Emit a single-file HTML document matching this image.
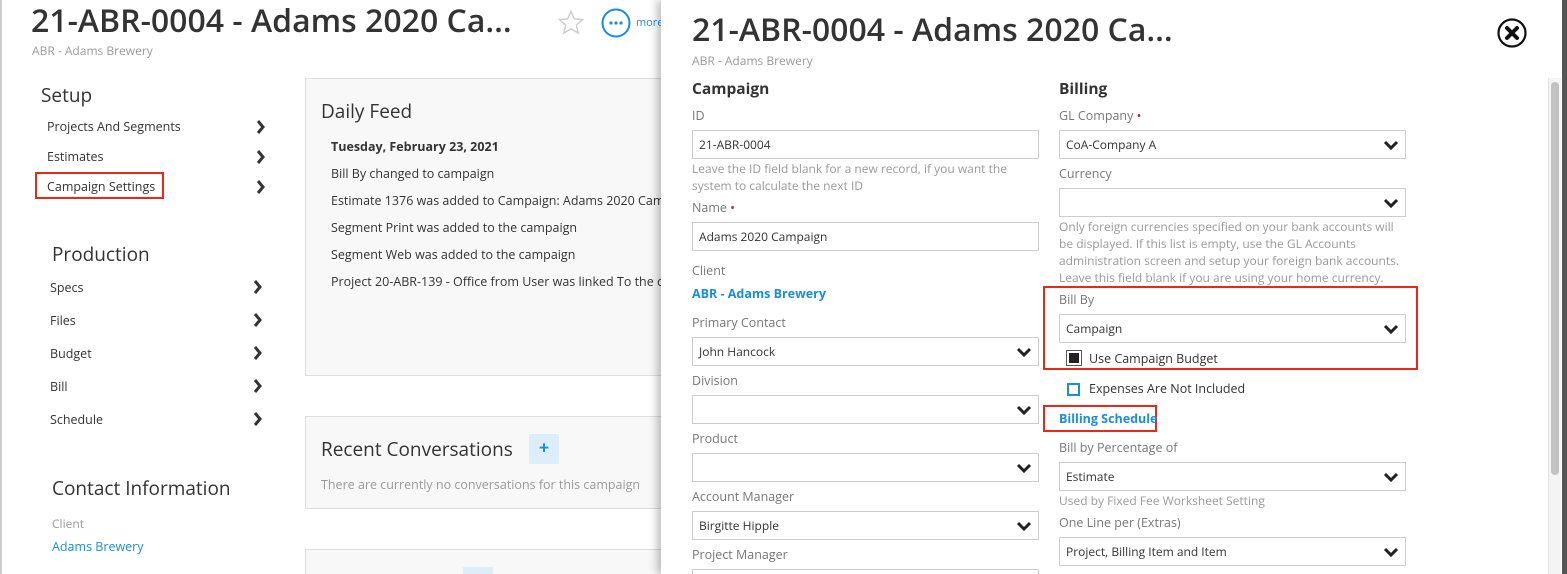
<!DOCTYPE html>
<html style="width:1567px;height:574px;overflow:hidden"><head><meta charset="utf-8"><style>
*{margin:0;padding:0;box-sizing:border-box}
body{width:1567px;height:574px;overflow:hidden;position:relative;background:#fff;font-family:"Open Sans","Liberation Sans",sans-serif;color:#333}
.a{position:absolute;white-space:nowrap}
.t{font-size:12.5px;color:#333}
.g{color:#999;font-size:12px}
.h{font-size:19px;color:#333;font-weight:500}
.card{position:absolute;background:#f8f8f8;border:1px solid #ddd}
.inp{position:absolute;height:29px;border:1px solid #ccc;background:#fff;font-size:12px;padding:5px 6px;white-space:nowrap}
.lab{position:absolute;font-size:12.5px;color:#777;white-space:nowrap}
.sel svg{position:absolute;right:6px;top:9px}
.red{position:absolute;border:2px solid #e8281b}
.ttl{font-size:32px;font-weight:600;color:#333}
</style></head><body>
<div style="position:absolute;left:0;top:0;width:2px;height:574px;background:#ccc"></div>
<div class="a ttl" style="left:31px;top:-1px">21-ABR-0004 - Adams 2020 Ca...</div>
<div class="a g" style="left:32px;top:42px">ABR - Adams Brewery</div>
<svg class="a" style="left:557px;top:9px" width="28" height="28" viewBox="0 0 24 24"><path d="M12 2l2.9 6.5 7 .6-5.3 4.6 1.6 6.9L12 17l-6.2 3.6 1.6-6.9L2.1 9.1l7-.6z" fill="none" stroke="#ccc" stroke-width="1.2"/></svg>
<svg class="a" style="left:601px;top:8px" width="30" height="30"><circle cx="15" cy="15" r="13.5" fill="none" stroke="#1a8ed6" stroke-width="2"/><circle cx="10" cy="15" r="1.6" fill="#1a8ed6"/><circle cx="15" cy="15" r="1.6" fill="#1a8ed6"/><circle cx="20" cy="15" r="1.6" fill="#1a8ed6"/></svg>
<div class="a" style="left:636px;top:15px;font-size:11px;color:#1a8ed6">more</div>

<div class="a h" style="left:41px;top:82px">Setup</div>
<div class="a t" style="left:47px;top:118px">Projects And Segments</div>
<div class="a t" style="left:47px;top:148px">Estimates</div>
<div class="a t" style="left:47px;top:178px">Campaign Settings</div>
<div class="red" style="left:35px;top:172px;width:129px;height:27px"></div>
<div class="a h" style="left:52px;top:241px">Production</div>
<div class="a t" style="left:50px;top:279px">Specs</div>
<div class="a t" style="left:50px;top:312px">Files</div>
<div class="a t" style="left:50px;top:345px">Budget</div>
<div class="a t" style="left:50px;top:378px">Bill</div>
<div class="a t" style="left:50px;top:411px">Schedule</div>
<div class="a h" style="left:52px;top:475px">Contact Information</div>
<div class="a g" style="left:52px;top:515px">Client</div>
<div class="a" style="left:52px;top:538px;font-size:12.5px;color:#1a8ed6">Adams Brewery</div>

<svg class="a" style="left:0;top:0" width="300" height="574">
<g fill="none" stroke="#333" stroke-width="3">
<path d="M258 121l5 6-5 6"/><path d="M258 151l5 6-5 6"/><path d="M258 181l5 6-5 6"/>
<path d="M255 281l5 6-5 6"/><path d="M255 314l5 6-5 6"/><path d="M255 347l5 6-5 6"/><path d="M255 380l5 6-5 6"/><path d="M255 413l5 6-5 6"/>
</g></svg>

<div class="card" style="left:305px;top:78px;width:400px;height:298px"></div>
<div class="a h" style="left:321px;top:98px">Daily Feed</div>
<div class="a t" style="left:331px;top:138px;font-weight:bold">Tuesday, February 23, 2021</div>
<div class="a t" style="left:331px;top:165px">Bill By changed to campaign</div>
<div class="a t" style="left:331px;top:192px">Estimate 1376 was added to Campaign: Adams 2020 Campaign</div>
<div class="a t" style="left:331px;top:219px">Segment Print was added to the campaign</div>
<div class="a t" style="left:331px;top:246px">Segment Web was added to the campaign</div>
<div class="a t" style="left:331px;top:273px">Project 20-ABR-139 - Office from User was linked To the campaign</div>

<div class="card" style="left:305px;top:416px;width:400px;height:93px"></div>
<div class="a h" style="left:321px;top:436px">Recent Conversations</div>
<div class="a" style="left:529px;top:434px;width:30px;height:30px;background:#dceefa;border-radius:2px;color:#1a8ed6;font-weight:bold;font-size:18px;text-align:center;line-height:29px">+</div>
<div class="a g" style="left:321px;top:476px;font-size:12.5px">There are currently no conversations for this campaign</div>
<div class="card" style="left:305px;top:549px;width:400px;height:40px"></div>
<div class="a" style="left:463px;top:567px;width:30px;height:20px;background:#dceefa"></div>

<div style="position:absolute;left:661px;top:0;width:901px;height:574px;background:#fff;box-shadow:-4px 0 8px rgba(0,0,0,0.25)"></div>
<div style="position:absolute;left:1562px;top:0;width:5px;height:574px;background:#555"></div>
<div style="position:absolute;left:1548px;top:78px;width:13px;height:496px;background:#f4f4f4;border-left:1px solid #e4e4e4"></div>
<div style="position:absolute;left:1551px;top:82px;width:8px;height:393px;background:#c2c2c2;border-radius:4px"></div>

<div class="a ttl" style="left:692px;top:8px">21-ABR-0004 - Adams 2020 Ca...</div>
<div class="a g" style="left:692px;top:52px">ABR - Adams Brewery</div>
<svg class="a" style="left:1497px;top:18px" width="30" height="30"><circle cx="15" cy="15" r="13.5" fill="none" stroke="#111" stroke-width="2.2"/><path d="M10 10l10 10M20 10l-10 10" stroke="#111" stroke-width="4" stroke-linecap="round"/></svg>

<div class="a" style="left:692px;top:77px;font-size:15.5px;font-weight:bold;color:#333">Campaign</div>
<div class="a" style="left:1059px;top:77px;font-size:15.5px;font-weight:bold;color:#333">Billing</div>

<div class="lab" style="left:692px;top:107px">ID</div>
<div class="inp" style="left:692px;top:130px;width:347px">21-ABR-0004</div>
<div class="lab" style="left:692px;top:160px;color:#999;font-size:12px;line-height:17px;white-space:normal;width:340px">Leave the ID field blank for a new record, if you want the system to calculate the next ID</div>
<div class="lab" style="left:692px;top:199px">Name <span style="color:#b22">•</span></div>
<div class="inp" style="left:692px;top:222px;width:347px">Adams 2020 Campaign</div>
<div class="lab" style="left:692px;top:262px">Client</div>
<div class="a" style="left:692px;top:285px;font-size:12.5px;font-weight:bold;color:#1a8ed6">ABR - Adams Brewery</div>
<div class="lab" style="left:692px;top:314px">Primary Contact</div>
<div class="inp sel" style="left:692px;top:337px;width:347px">John Hancock<svg width="16" height="10"><path d="M2 2l6 6 6-6" fill="none" stroke="#222" stroke-width="3"/></svg></div>
<div class="lab" style="left:692px;top:372px">Division</div>
<div class="inp sel" style="left:692px;top:395px;width:347px"><svg width="16" height="10"><path d="M2 2l6 6 6-6" fill="none" stroke="#222" stroke-width="3"/></svg></div>
<div class="lab" style="left:692px;top:430px">Product</div>
<div class="inp sel" style="left:692px;top:453px;width:347px"><svg width="16" height="10"><path d="M2 2l6 6 6-6" fill="none" stroke="#222" stroke-width="3"/></svg></div>
<div class="lab" style="left:692px;top:488px">Account Manager</div>
<div class="inp sel" style="left:692px;top:511px;width:347px">Birgitte Hipple<svg width="16" height="10"><path d="M2 2l6 6 6-6" fill="none" stroke="#222" stroke-width="3"/></svg></div>
<div class="lab" style="left:692px;top:546px">Project Manager</div>
<div class="inp" style="left:692px;top:569px;width:347px"></div>

<div class="lab" style="left:1059px;top:107px">GL Company <span style="color:#b22">•</span></div>
<div class="inp sel" style="left:1059px;top:130px;width:347px">CoA-Company A<svg width="16" height="10"><path d="M2 2l6 6 6-6" fill="none" stroke="#222" stroke-width="3"/></svg></div>
<div class="lab" style="left:1059px;top:165px">Currency</div>
<div class="inp sel" style="left:1059px;top:188px;width:347px"><svg width="16" height="10"><path d="M2 2l6 6 6-6" fill="none" stroke="#222" stroke-width="3"/></svg></div>
<div class="lab" style="left:1059px;top:218px;color:#999;font-size:12px;line-height:17px;white-space:normal;width:350px">Only foreign currencies specified on your bank accounts will be displayed. If this list is empty, use the GL Accounts administration screen and setup your foreign bank accounts. Leave this field blank if you are using your home currency.</div>
<div class="red" style="left:1043px;top:286px;width:375px;height:84px"></div>
<div class="lab" style="left:1059px;top:291px">Bill By</div>
<div class="inp sel" style="left:1059px;top:314px;width:347px">Campaign<svg width="16" height="10"><path d="M2 2l6 6 6-6" fill="none" stroke="#222" stroke-width="3"/></svg></div>
<div class="a" style="left:1066px;top:350px;width:16px;height:16px;border:1px solid #555;background:#fff"><div style="margin:2px;width:10px;height:10px;background:#222"></div></div>
<div class="a t" style="left:1089px;top:350px">Use Campaign Budget</div>
<div class="a" style="left:1067px;top:383px;width:13px;height:13px;border:2px solid #1a8ed6;background:#fff"></div>
<div class="a t" style="left:1089px;top:380px">Expenses Are Not Included</div>
<div class="red" style="left:1043px;top:405px;width:114px;height:27px"></div>
<div class="a" style="left:1059px;top:410px;font-size:12.5px;font-weight:bold;color:#1a8ed6">Billing Schedule</div>
<div class="lab" style="left:1059px;top:439px">Bill by Percentage of</div>
<div class="inp sel" style="left:1059px;top:462px;width:347px">Estimate<svg width="16" height="10"><path d="M2 2l6 6 6-6" fill="none" stroke="#222" stroke-width="3"/></svg></div>
<div class="lab" style="left:1059px;top:492px;color:#999;font-size:12px">Used by Fixed Fee Worksheet Setting</div>
<div class="lab" style="left:1059px;top:514px">One Line per (Extras)</div>
<div class="inp sel" style="left:1059px;top:537px;width:347px">Project, Billing Item and Item<svg width="16" height="10"><path d="M2 2l6 6 6-6" fill="none" stroke="#222" stroke-width="3"/></svg></div>
</body></html>
